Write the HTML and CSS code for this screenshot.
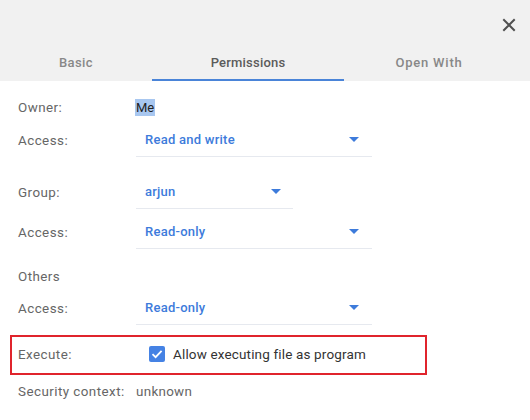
FILE: index.html
```html
<!DOCTYPE html>
<html>
<head>
<meta charset="utf-8">
<link rel="stylesheet" href="styles.css">
</head>
<body>
<div class="dialog">
  <div class="header">
    <div class="topbar">
      <button class="close" aria-label="Close">
        <svg width="14" height="14" viewBox="0 0 14 14"><path d="M2 2 L12 12 M12 2 L2 12" stroke="#505050" stroke-width="2" stroke-linecap="square"/></svg>
      </button>
    </div>
    <div class="tabs">
      <div class="tab">Basic</div>
      <div class="tab active">Permissions</div>
      <div class="tab">Open With</div>
    </div>
  </div>
  <div class="content">
    <div class="row owner">
      <div class="label">Owner:</div>
      <div class="value"><span class="selected">Me</span></div>
    </div>
    <div class="row r-access1">
      <div class="label">Access:</div>
      <div class="select wide"><span>Read and write</span><span class="caret"></span></div>
    </div>
    <div class="row r-group">
      <div class="label">Group:</div>
      <div class="select narrow"><span>arjun</span><span class="caret"></span></div>
    </div>
    <div class="row r-access2">
      <div class="label">Access:</div>
      <div class="select wide"><span>Read-only</span><span class="caret"></span></div>
    </div>
    <div class="row r-others">
      <div class="label">Others</div>
    </div>
    <div class="row r-access3">
      <div class="label">Access:</div>
      <div class="select wide"><span>Read-only</span><span class="caret"></span></div>
    </div>
    <div class="execute">
      <div class="label">Execute:</div>
      <div class="check">
        <span class="box"><svg width="16" height="16" viewBox="0 0 16 16"><path d="M3.5 8.2 L6.6 11.2 L12.6 4.8" fill="none" stroke="#fff" stroke-width="1.8"/></svg></span>
        <span class="check-text">Allow executing file as program</span>
      </div>
    </div>
    <div class="row r-security">
      <div class="label">Security context:</div>
      <div class="value plain">unknown</div>
    </div>
  </div>
</div>
</body>
</html>
```

FILE: styles.css
```css
* { box-sizing: border-box; }
html, body { margin: 0; padding: 0; }
body {
  width: 530px;
  height: 420px;
  background: #ffffff;
  font-family: Roboto, "Liberation Sans", sans-serif;
  font-size: 13px;
  color: #606060;
  overflow: hidden;
}
.header {
  background: #f1f1f1;
  height: 81px;
  display: flex;
  flex-direction: column;
}
.topbar {
  height: 48px;
  display: flex;
  justify-content: flex-end;
  align-items: center;
}
.close {
  border: none;
  background: transparent;
  padding: 0;
  width: 14px;
  height: 14px;
  margin-right: 14px;
  margin-top: 1px;
  display: flex;
}
.tabs {
  display: grid;
  grid-template-columns: 152px 192px 1fr;
  flex: 1;
}
.tab {
  display: flex;
  align-items: center;
  justify-content: center;
  font-weight: 500;
  color: #888888;
  letter-spacing: 0.4px;
  border-bottom: 2px solid transparent;
  padding-bottom: 3px;
}
.tab:last-child { padding-right: 16px; letter-spacing: 0.8px; }
.tab.active {
  color: #5b5b5b;
  letter-spacing: 0.2px;
  border-bottom-color: #4a84d8;
}
.content {
  padding: 0 0 0 18px;
  display: flex;
  flex-direction: column;
}
.row {
  display: flex;
  align-items: center;
}
.label {
  width: 118px;
  flex: none;
  color: #666666;
  font-size: 13.4px;
  letter-spacing: 0.45px;
  white-space: nowrap;
}
.value { color: #222; }
.value.plain { color: #666666; font-size: 13.4px; letter-spacing: 0.3px; }
.selected {
  background: #a8c7f0;
  display: inline-block;
  height: 17px;
  line-height: 17px;
  padding: 0 1px 0 1px;
  margin-left: -1px;
}
.owner { height: 18px; margin-top: 17px; }
.r-access1 { margin-top: 7px; }
.r-group { margin-top: 18px; }
.r-access2 { margin-top: 6px; }
.r-others { height: 18px; margin-top: 18px; }
.r-access3 { margin-top: 6px; }
.r-security { height: 18px; margin-top: 6px; }
.select {
  height: 34px;
  border-bottom: 1px solid #e6e9ef;
  display: flex;
  align-items: center;
  justify-content: space-between;
  padding-left: 9px;
  color: #3d7bdb;
  font-weight: 500;
  letter-spacing: 0.25px;
  padding-bottom: 1px;
}
.select.wide { width: 236px; padding-right: 13px; }
.select.narrow { width: 157px; padding-right: 12px; }
.caret {
  width: 0;
  height: 0;
  border-left: 5px solid transparent;
  border-right: 5px solid transparent;
  border-top: 5px solid #3d7bdb;
}
.execute {
  margin-top: 10px;
  margin-left: -8px;
  width: 417px;
  height: 40px;
  border: 2px solid #e0242c;
  display: flex;
  align-items: center;
  padding-left: 6px;
  padding-bottom: 2px;
}
.execute .label { width: 131px; }
.check {
  display: flex;
  align-items: center;
}
.box {
  width: 16px;
  height: 16px;
  border-radius: 2px;
  background: #4582e4;
  display: flex;
  margin-right: 8px;
}
.check-text {
  color: #333333;
  font-size: 13.5px;
  letter-spacing: 0.15px;
}
.r-security { margin-top: 7px; }
```
